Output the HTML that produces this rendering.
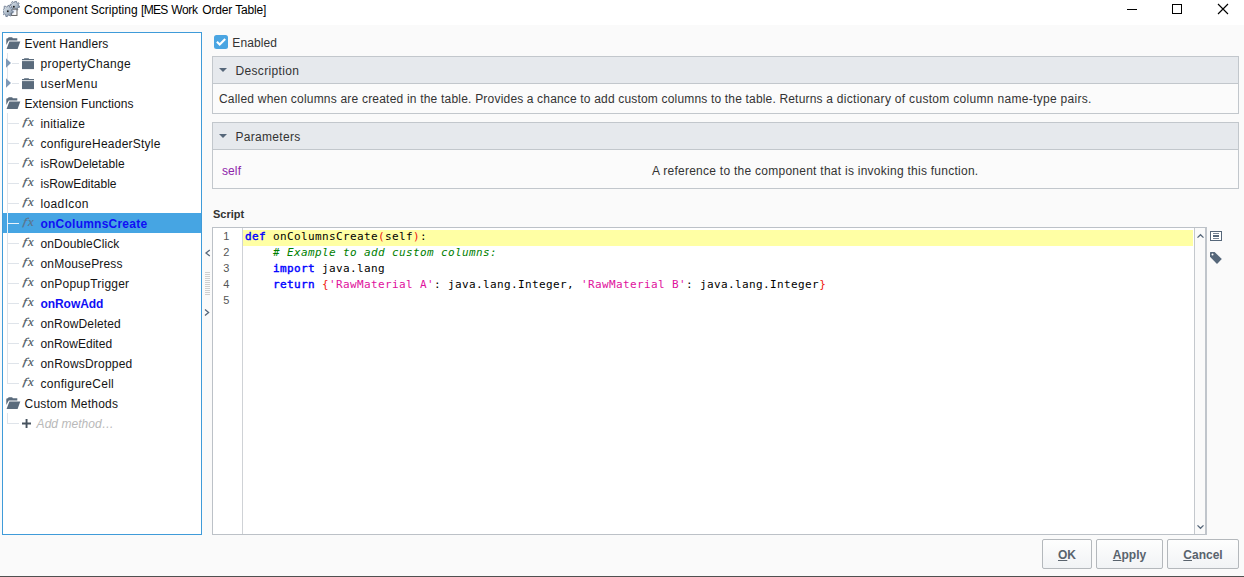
<!DOCTYPE html>
<html lang="en">
<head>
<meta charset="utf-8">
<title>Component Scripting [MES Work Order Table]</title>
<style>
*{box-sizing:border-box;margin:0;padding:0}
html,body{width:1244px;height:577px;overflow:hidden;background:#fafafa;font-family:"Liberation Sans","DejaVu Sans",sans-serif;font-size:12px;color:#222}
.abs{position:absolute}
#titlebar{position:absolute;left:0;top:0;width:1244px;height:25px;background:#fff}
#title{position:absolute;left:24px;top:2px;font-size:12px;line-height:16px;color:#000;white-space:nowrap}
#title span{position:absolute;top:0}
#tree{position:absolute;left:2px;top:32px;width:200px;height:503px;background:#fff;border:1px solid #3f9bd9;overflow:hidden}
.row{position:absolute;left:0;width:198px;height:20px;white-space:nowrap}
.row .t{position:absolute;top:1px;line-height:20px;font-size:12px;color:#141414}
.row.sel{background:#46a5e3}
.row .t.bold{font-weight:bold;color:#0f0ff5}
.row .t.add{font-style:italic;color:#b9b9b9}
.ic{position:absolute;display:block}
.fx{position:absolute;left:19px;top:0;height:20px;font-family:"Liberation Serif","DejaVu Serif",serif;white-space:nowrap}
.fx i{position:absolute;font-style:italic;line-height:1}
.fx i{font-weight:normal;-webkit-text-stroke:0.35px currentColor}
.fx .f{left:2.3px;top:3.4px;font-size:10.8px;transform:scaleX(1.28);transform-origin:0 100%}
.fx .x{left:6.1px;top:2px;font-size:12.5px}
.vl{position:absolute;left:4px;width:1px;background:#dfe4ea;z-index:1}
.hl{position:absolute;height:1px;background:#dfe4ea}
.box{position:absolute;left:212px;width:1027px;border:1px solid #c2c7cc;background:#fbfbfb}
.box .hd{height:27px;background:#e6e9ed;border-bottom:1px solid #c2c7cc;position:relative}
.box .hd span{position:absolute;left:22.5px;top:1px;line-height:27px;font-size:12px;color:#333}
.tri{position:absolute;left:6px;top:11px;width:0;height:0;border-left:4px solid transparent;border-right:4px solid transparent;border-top:4.5px solid #56677a}
.btn{position:absolute;top:539px;height:30px;border:1px solid #b4b8bc;border-radius:2px;background:linear-gradient(#fefefe,#f1f3f5);font-weight:bold;font-size:12px;color:#59636d;text-align:center;line-height:30px;white-space:nowrap}
.btn u{text-decoration:underline;text-underline-offset:0.5px}
#editor{position:absolute;left:212px;top:227px;width:995px;height:308px;border:1px solid #bcc1c7;border-right:2px solid #c0c5cb;background:#fff}
.ln{position:absolute;left:3.4px;width:20px;text-align:center;font-size:11px;color:#555;height:16px;line-height:16px}
.code{position:absolute;left:32px;height:16px;line-height:16px;font-family:"DejaVu Sans Mono","Liberation Mono",monospace;font-size:11px;letter-spacing:0.378px;white-space:pre;color:#000}
.kw{color:#0000ff;-webkit-text-stroke:0.4px #0000ff}
.cm{color:#008000;font-style:italic}
.st{color:#e0119d}
.br{color:#f02010}
</style>
</head>
<body>
<div id="titlebar">
  <svg class="abs" style="left:2.7px;top:0.7px" width="17" height="17" viewBox="0 0 18 18">
    <defs>
      <linearGradient id="gg" x1="0" y1="0" x2="1" y2="1"><stop offset="0" stop-color="#eef2f6"/><stop offset="0.5" stop-color="#b4c1cf"/><stop offset="1" stop-color="#76889d"/></linearGradient>
      <linearGradient id="sq" x1="0" y1="0" x2="1" y2="1"><stop offset="0" stop-color="#b9c9e4"/><stop offset="0.7" stop-color="#ffffff"/></linearGradient>
    </defs>
    <path d="M17.59 5.42 L17.31 6.79 L15.96 6.67 L15.26 7.72 L15.87 8.92 L14.71 9.70 L13.84 8.66 L12.60 8.90 L12.18 10.19 L10.81 9.91 L10.93 8.56 L9.88 7.86 L8.68 8.47 L7.90 7.31 L8.94 6.44 L8.70 5.20 L7.41 4.78 L7.69 3.41 L9.04 3.53 L9.74 2.48 L9.13 1.28 L10.29 0.50 L11.16 1.54 L12.40 1.30 L12.82 0.01 L14.19 0.29 L14.07 1.64 L15.12 2.34 L16.32 1.73 L17.10 2.89 L16.06 3.76 L16.30 5.00 Z" fill="url(#gg)" stroke="#66758a" stroke-width="0.9"/>
    <rect x="8.9" y="8.6" width="5.9" height="6.7" fill="url(#sq)" stroke="#666" stroke-width="1.1"/>
    <path d="M10.89 10.98 L10.56 12.59 L9.00 12.46 L8.16 13.70 L8.87 15.10 L7.50 16.01 L6.48 14.81 L5.02 15.10 L4.52 16.59 L2.91 16.26 L3.04 14.70 L1.80 13.86 L0.40 14.57 L-0.51 13.20 L0.69 12.18 L0.40 10.72 L-1.09 10.22 L-0.76 8.61 L0.80 8.74 L1.64 7.50 L0.93 6.10 L2.30 5.19 L3.32 6.39 L4.78 6.10 L5.28 4.61 L6.89 4.94 L6.76 6.50 L8.00 7.34 L9.40 6.63 L10.31 8.00 L9.11 9.02 L9.40 10.48 Z" fill="url(#gg)" stroke="#6c7a8f" stroke-width="0.9"/>
    <circle cx="11.5" cy="6.1" r="1" fill="#1c1c1c"/>
    <circle cx="5.1" cy="10.8" r="1" fill="#1c1c1c"/>
  </svg>
  <div id="title"><span style="left:0.10px;letter-spacing:0.175px">Component</span> <span style="left:66.70px;letter-spacing:0.025px">Scripting</span> <span style="left:116.95px;letter-spacing:-0.633px">[MES</span> <span style="left:147.25px;letter-spacing:-0.367px">Work</span> <span style="left:178.30px;letter-spacing:-0.2px">Order</span> <span style="left:211.25px;letter-spacing:-0.18px">Table]</span></div>
  <div class="abs" style="left:1127px;top:9px;width:10px;height:1px;background:#000"></div>
  <div class="abs" style="left:1172px;top:4px;width:10px;height:10px;border:1px solid #000"></div>
  <svg class="abs" style="left:1217px;top:3px" width="12" height="12" viewBox="0 0 12 12"><path d="M1 1 L11 11 M11 1 L1 11" stroke="#000" stroke-width="1.15" fill="none"/></svg>
</div>

<div id="tree">
  <div class="vl" style="top:20px;height:30px"></div>
  <div class="vl" style="top:80px;height:271px"></div>
  <div class="vl" style="top:380px;height:11px"></div>
  <div class="vl" style="top:180px;height:20px;background:#e9f3fb;z-index:2"></div>
  <div class="row" style="top:0px"><svg class="ic" style="left:3px;top:4px" width="15" height="13" viewBox="0 0 15 13"><path d="M0.3 2.2 Q0.3 1.2 1.3 1.2 L2 1.2 L2.6 0.2 L6.2 0.2 L6.8 1.2 L11.3 1.2 L11.3 3.6 L2.8 3.6 L0.3 8 Z" fill="#5a6b7c"/><path d="M3.4 4.4 L14.3 4.4 L11.6 12 L0.6 12 Z" fill="#5a6b7c"/></svg><span class="t" style="left:21.5px;letter-spacing:0.14px">Event Handlers</span></div>
  <div class="row" style="top:20px"><i class="hl" style="left:9px;top:10px;width:7px;background:#dfe4ea"></i><svg class="ic" style="left:3px;top:5px;z-index:3" width="5" height="10" viewBox="0 0 5 10"><path d="M0 0.2 L5 5 L0 9.8 Z" fill="#7d98b5"/></svg><svg class="ic" style="left:19px;top:5px" width="12" height="12" viewBox="0 0 12 12"><path d="M2.4 0.2 L6.6 0.2 L7.2 1 L12 1 L12 2.2 L0 2.2 L0 1 L1.8 1 Z" fill="#5a6b7c"/><rect x="0" y="3.1" width="12" height="8" fill="#5a6b7c"/></svg><span class="t" style="left:37.5px;letter-spacing:0.31px">propertyChange</span></div>
  <div class="row" style="top:40px"><i class="hl" style="left:9px;top:10px;width:7px;background:#dfe4ea"></i><svg class="ic" style="left:3px;top:5px;z-index:3" width="5" height="10" viewBox="0 0 5 10"><path d="M0 0.2 L5 5 L0 9.8 Z" fill="#7d98b5"/></svg><svg class="ic" style="left:19px;top:5px" width="12" height="12" viewBox="0 0 12 12"><path d="M2.4 0.2 L6.6 0.2 L7.2 1 L12 1 L12 2.2 L0 2.2 L0 1 L1.8 1 Z" fill="#5a6b7c"/><rect x="0" y="3.1" width="12" height="8" fill="#5a6b7c"/></svg><span class="t" style="left:37.5px;letter-spacing:0.5px">userMenu</span></div>
  <div class="row" style="top:60px"><svg class="ic" style="left:3px;top:4px" width="15" height="13" viewBox="0 0 15 13"><path d="M0.3 2.2 Q0.3 1.2 1.3 1.2 L2 1.2 L2.6 0.2 L6.2 0.2 L6.8 1.2 L11.3 1.2 L11.3 3.6 L2.8 3.6 L0.3 8 Z" fill="#5a6b7c"/><path d="M3.4 4.4 L14.3 4.4 L11.6 12 L0.6 12 Z" fill="#5a6b7c"/></svg><span class="t" style="left:21.5px;letter-spacing:0.05px">Extension Functions</span></div>
  <div class="row" style="top:80px"><i class="hl" style="left:5px;top:10px;width:11px;background:#dfe4ea"></i><svg class="ic" style="left:18px;top:3px;overflow:visible" width="15" height="14" viewBox="0 0 15 14" fill="#4c5863" stroke="#4c5863" stroke-width="0.18" font-family="Liberation Serif, DejaVu Serif, serif" font-style="italic"><text transform="translate(1.6 8.93) skewX(-9) scale(1.38 1)" font-size="10.2">f</text><text transform="translate(6.9 9.5) scale(1.06 1)" font-size="12">x</text></svg><span class="t" style="left:37.5px;letter-spacing:0.2px">initialize</span></div>
  <div class="row" style="top:100px"><i class="hl" style="left:5px;top:10px;width:11px;background:#dfe4ea"></i><svg class="ic" style="left:18px;top:3px;overflow:visible" width="15" height="14" viewBox="0 0 15 14" fill="#4c5863" stroke="#4c5863" stroke-width="0.18" font-family="Liberation Serif, DejaVu Serif, serif" font-style="italic"><text transform="translate(1.6 8.93) skewX(-9) scale(1.38 1)" font-size="10.2">f</text><text transform="translate(6.9 9.5) scale(1.06 1)" font-size="12">x</text></svg><span class="t" style="left:37.5px;letter-spacing:0.237px">configureHeaderStyle</span></div>
  <div class="row" style="top:120px"><i class="hl" style="left:5px;top:10px;width:11px;background:#dfe4ea"></i><svg class="ic" style="left:18px;top:3px;overflow:visible" width="15" height="14" viewBox="0 0 15 14" fill="#4c5863" stroke="#4c5863" stroke-width="0.18" font-family="Liberation Serif, DejaVu Serif, serif" font-style="italic"><text transform="translate(1.6 8.93) skewX(-9) scale(1.38 1)" font-size="10.2">f</text><text transform="translate(6.9 9.5) scale(1.06 1)" font-size="12">x</text></svg><span class="t" style="left:37.5px;letter-spacing:0.054px">isRowDeletable</span></div>
  <div class="row" style="top:140px"><i class="hl" style="left:5px;top:10px;width:11px;background:#dfe4ea"></i><svg class="ic" style="left:18px;top:3px;overflow:visible" width="15" height="14" viewBox="0 0 15 14" fill="#4c5863" stroke="#4c5863" stroke-width="0.18" font-family="Liberation Serif, DejaVu Serif, serif" font-style="italic"><text transform="translate(1.6 8.93) skewX(-9) scale(1.38 1)" font-size="10.2">f</text><text transform="translate(6.9 9.5) scale(1.06 1)" font-size="12">x</text></svg><span class="t" style="left:37.5px">isRowEditable</span></div>
  <div class="row" style="top:160px"><i class="hl" style="left:5px;top:10px;width:11px;background:#dfe4ea"></i><svg class="ic" style="left:18px;top:3px;overflow:visible" width="15" height="14" viewBox="0 0 15 14" fill="#4c5863" stroke="#4c5863" stroke-width="0.18" font-family="Liberation Serif, DejaVu Serif, serif" font-style="italic"><text transform="translate(1.6 8.93) skewX(-9) scale(1.38 1)" font-size="10.2">f</text><text transform="translate(6.9 9.5) scale(1.06 1)" font-size="12">x</text></svg><span class="t" style="left:37.5px;letter-spacing:0.36px">loadIcon</span></div>
  <div class="row sel" style="top:180px"><i class="hl" style="left:5px;top:10px;width:11px;background:#e9f3fb"></i><svg class="ic" style="left:18px;top:3px;overflow:visible" width="15" height="14" viewBox="0 0 15 14" fill="#5d748b" stroke="#5d748b" stroke-width="0.18" font-family="Liberation Serif, DejaVu Serif, serif" font-style="italic"><text transform="translate(1.6 8.93) skewX(-9) scale(1.38 1)" font-size="10.2">f</text><text transform="translate(6.9 9.5) scale(1.06 1)" font-size="12">x</text></svg><span class="t bold" style="left:37.5px;letter-spacing:0.23px">onColumnsCreate</span></div>
  <div class="row" style="top:200px"><i class="hl" style="left:5px;top:10px;width:11px;background:#dfe4ea"></i><svg class="ic" style="left:18px;top:3px;overflow:visible" width="15" height="14" viewBox="0 0 15 14" fill="#4c5863" stroke="#4c5863" stroke-width="0.18" font-family="Liberation Serif, DejaVu Serif, serif" font-style="italic"><text transform="translate(1.6 8.93) skewX(-9) scale(1.38 1)" font-size="10.2">f</text><text transform="translate(6.9 9.5) scale(1.06 1)" font-size="12">x</text></svg><span class="t" style="left:37.5px;letter-spacing:0.125px">onDoubleClick</span></div>
  <div class="row" style="top:220px"><i class="hl" style="left:5px;top:10px;width:11px;background:#dfe4ea"></i><svg class="ic" style="left:18px;top:3px;overflow:visible" width="15" height="14" viewBox="0 0 15 14" fill="#4c5863" stroke="#4c5863" stroke-width="0.18" font-family="Liberation Serif, DejaVu Serif, serif" font-style="italic"><text transform="translate(1.6 8.93) skewX(-9) scale(1.38 1)" font-size="10.2">f</text><text transform="translate(6.9 9.5) scale(1.06 1)" font-size="12">x</text></svg><span class="t" style="left:37.5px;letter-spacing:0.18px">onMousePress</span></div>
  <div class="row" style="top:240px"><i class="hl" style="left:5px;top:10px;width:11px;background:#dfe4ea"></i><svg class="ic" style="left:18px;top:3px;overflow:visible" width="15" height="14" viewBox="0 0 15 14" fill="#4c5863" stroke="#4c5863" stroke-width="0.18" font-family="Liberation Serif, DejaVu Serif, serif" font-style="italic"><text transform="translate(1.6 8.93) skewX(-9) scale(1.38 1)" font-size="10.2">f</text><text transform="translate(6.9 9.5) scale(1.06 1)" font-size="12">x</text></svg><span class="t" style="left:37.5px;letter-spacing:0.23px">onPopupTrigger</span></div>
  <div class="row" style="top:260px"><i class="hl" style="left:5px;top:10px;width:11px;background:#dfe4ea"></i><svg class="ic" style="left:18px;top:3px;overflow:visible" width="15" height="14" viewBox="0 0 15 14" fill="#4c5863" stroke="#4c5863" stroke-width="0.18" font-family="Liberation Serif, DejaVu Serif, serif" font-style="italic"><text transform="translate(1.6 8.93) skewX(-9) scale(1.38 1)" font-size="10.2">f</text><text transform="translate(6.9 9.5) scale(1.06 1)" font-size="12">x</text></svg><span class="t bold" style="left:37.5px;letter-spacing:-0.07px">onRowAdd</span></div>
  <div class="row" style="top:280px"><i class="hl" style="left:5px;top:10px;width:11px;background:#dfe4ea"></i><svg class="ic" style="left:18px;top:3px;overflow:visible" width="15" height="14" viewBox="0 0 15 14" fill="#4c5863" stroke="#4c5863" stroke-width="0.18" font-family="Liberation Serif, DejaVu Serif, serif" font-style="italic"><text transform="translate(1.6 8.93) skewX(-9) scale(1.38 1)" font-size="10.2">f</text><text transform="translate(6.9 9.5) scale(1.06 1)" font-size="12">x</text></svg><span class="t" style="left:37.5px;letter-spacing:0.136px">onRowDeleted</span></div>
  <div class="row" style="top:300px"><i class="hl" style="left:5px;top:10px;width:11px;background:#dfe4ea"></i><svg class="ic" style="left:18px;top:3px;overflow:visible" width="15" height="14" viewBox="0 0 15 14" fill="#4c5863" stroke="#4c5863" stroke-width="0.18" font-family="Liberation Serif, DejaVu Serif, serif" font-style="italic"><text transform="translate(1.6 8.93) skewX(-9) scale(1.38 1)" font-size="10.2">f</text><text transform="translate(6.9 9.5) scale(1.06 1)" font-size="12">x</text></svg><span class="t" style="left:37.5px;letter-spacing:0.02px">onRowEdited</span></div>
  <div class="row" style="top:320px"><i class="hl" style="left:5px;top:10px;width:11px;background:#dfe4ea"></i><svg class="ic" style="left:18px;top:3px;overflow:visible" width="15" height="14" viewBox="0 0 15 14" fill="#4c5863" stroke="#4c5863" stroke-width="0.18" font-family="Liberation Serif, DejaVu Serif, serif" font-style="italic"><text transform="translate(1.6 8.93) skewX(-9) scale(1.38 1)" font-size="10.2">f</text><text transform="translate(6.9 9.5) scale(1.06 1)" font-size="12">x</text></svg><span class="t" style="left:37.5px;letter-spacing:0.19px">onRowsDropped</span></div>
  <div class="row" style="top:340px"><i class="hl" style="left:5px;top:10px;width:11px;background:#dfe4ea"></i><svg class="ic" style="left:18px;top:3px;overflow:visible" width="15" height="14" viewBox="0 0 15 14" fill="#4c5863" stroke="#4c5863" stroke-width="0.18" font-family="Liberation Serif, DejaVu Serif, serif" font-style="italic"><text transform="translate(1.6 8.93) skewX(-9) scale(1.38 1)" font-size="10.2">f</text><text transform="translate(6.9 9.5) scale(1.06 1)" font-size="12">x</text></svg><span class="t" style="left:37.5px;letter-spacing:0.27px">configureCell</span></div>
  <div class="row" style="top:360px"><svg class="ic" style="left:3px;top:4px" width="15" height="13" viewBox="0 0 15 13"><path d="M0.3 2.2 Q0.3 1.2 1.3 1.2 L2 1.2 L2.6 0.2 L6.2 0.2 L6.8 1.2 L11.3 1.2 L11.3 3.6 L2.8 3.6 L0.3 8 Z" fill="#5a6b7c"/><path d="M3.4 4.4 L14.3 4.4 L11.6 12 L0.6 12 Z" fill="#5a6b7c"/></svg><span class="t" style="left:21.5px;letter-spacing:0.21px">Custom Methods</span></div>
  <div class="row" style="top:380px"><i class="hl" style="left:5px;top:10px;width:11px;background:#dfe4ea"></i><svg class="ic" style="left:19px;top:6px" width="9" height="9" viewBox="0 0 9 9"><path d="M3.6 0h1.9v3.6h3.5v1.9h-3.5v3.5h-1.9v-3.5h-3.6v-1.9h3.6z" fill="#46525e"/></svg><span class="t add" style="left:33.6px;letter-spacing:0.04px">Add method…</span></div>
</div>

<div class="abs" style="left:214px;top:35px;width:14px;height:14px;border-radius:2.5px;background:#4aa5e2">
  <svg width="14" height="14" viewBox="0 0 14 14" style="display:block"><path d="M2.9 6.8 L5.7 9.6 L11.2 3.9" stroke="#fff" stroke-width="2.1" fill="none" stroke-linecap="butt" stroke-linejoin="miter"/></svg>
</div>
<div class="abs" style="left:232.3px;top:35px;line-height:16px;font-size:12px;color:#333;letter-spacing:0.1px">Enabled</div>

<div class="box" style="top:56px;height:58px">
  <div class="hd"><i class="tri"></i><span style="letter-spacing:0.34px">Description</span></div>
  <div class="abs" style="left:6px;top:28px;height:28px;line-height:28px;font-size:12px;white-space:nowrap;color:#333"><span class="abs" style="left:0.00px;top:0;letter-spacing:0.203px">Called when columns are created in the table. Provides</span> <span class="abs" style="left:307.75px;top:0;letter-spacing:0.175px">a chance to add custom columns to the table. Returns a</span> <span class="abs" style="left:617.75px;top:0;letter-spacing:0.308px">dictionary of custom column name-type pairs.</span></div>
</div>

<div class="box" style="top:122px;height:67px">
  <div class="hd"><i class="tri"></i><span style="letter-spacing:0.3px">Parameters</span></div>
  <div class="abs" style="left:9px;top:29px;line-height:38px;font-size:12px;color:#8e24aa;letter-spacing:0.1px">self</div>
  <div class="abs" style="left:439px;top:29px;line-height:38px;font-size:12px;white-space:nowrap;color:#333;letter-spacing:0.26px">A reference to the component that is invoking this function.</div>
</div>

<div class="abs" style="left:213px;top:206px;line-height:16px;font-size:11px;font-weight:bold;color:#333">Script</div>

<!-- splitter -->
<svg class="abs" style="left:203px;top:248px" width="9" height="70" viewBox="0 0 9 70">
  <path d="M6.8 2 L3 5 L6.8 8" stroke="#56677a" stroke-width="1.3" fill="none"/>
  <path d="M2 61.5 L5.6 64.5 L2 67.5" stroke="#56677a" stroke-width="1.3" fill="none"/>
  <g fill="#cfcfcf"><rect x="2" y="24" width="5" height="1"/><rect x="2" y="26" width="5" height="1"/><rect x="2" y="28" width="5" height="1"/><rect x="2" y="30" width="5" height="1"/><rect x="2" y="32" width="5" height="1"/><rect x="2" y="34" width="5" height="1"/><rect x="2" y="36" width="5" height="1"/><rect x="2" y="38" width="5" height="1"/><rect x="2" y="40" width="5" height="1"/><rect x="2" y="42" width="5" height="1"/><rect x="2" y="44" width="5" height="1"/><rect x="2" y="46" width="5" height="1"/></g>
</svg>

<div id="editor">
  <div class="abs" style="left:29px;top:0;width:1px;height:306px;background:#cfd2d6"></div>
  <div class="abs" style="left:30px;top:2px;width:950px;height:16px;background:#ffffa4"></div>
  <div class="ln" style="top:0px">1</div>
  <div class="ln" style="top:16px">2</div>
  <div class="ln" style="top:32px">3</div>
  <div class="ln" style="top:48px">4</div>
  <div class="ln" style="top:64px">5</div>
  <div class="code" style="top:1px"><span class="kw">def</span> onColumnsCreate<span class="br">(</span>self<span class="br">)</span>:</div>
  <div class="code" style="top:17px">    <span class="cm"># Example to add custom columns:</span></div>
  <div class="code" style="top:33px">    <span class="kw">import</span> java.lang</div>
  <div class="code" style="top:49px">    <span class="kw">return</span> <span class="br">{</span><span class="st">'RawMaterial A'</span>: java.lang.Integer, <span class="st">'RawMaterial B'</span>: java.lang.Integer<span class="br">}</span></div>
  <div class="abs" style="left:981px;top:0;width:11px;height:306px;background:#fafafa;border-left:1px solid #c4c8cd"></div>
  <svg class="abs" style="left:982.5px;top:4px" width="9" height="8" viewBox="0 0 9 8"><path d="M1.5 5.6 L4.5 2.7 L7.5 5.6" stroke="#56677a" stroke-width="1.3" fill="none"/></svg>
  <svg class="abs" style="left:982.5px;top:295.3px" width="9" height="8" viewBox="0 0 9 8"><path d="M1.5 2.4 L4.5 5.3 L7.5 2.4" stroke="#56677a" stroke-width="1.3" fill="none"/></svg>
</div>

<!-- side icons -->
<svg class="abs" style="left:1210px;top:231px" width="12" height="10" viewBox="0 0 12 10"><rect x="0.5" y="0.5" width="11" height="9" fill="#fff" stroke="#56677a" stroke-width="1"/><rect x="3" y="2" width="6" height="1" fill="#56677a" opacity=".8"/><rect x="3" y="4" width="6" height="2" fill="#56677a"/><rect x="3" y="7" width="6" height="1" fill="#56677a" opacity=".8"/></svg>
<svg class="abs" style="left:1210px;top:252px" width="12" height="12" viewBox="0 0 12 12"><path d="M0 0.6 Q0 0 0.6 0 L4.6 0 L11.8 7 L7 11.9 L0 4.8 Z" fill="#56677a"/><circle cx="2.5" cy="2.6" r="1" fill="#fff"/></svg>

<div class="btn" style="left:1042px;width:50px"><u>O</u>K</div>
<div class="btn" style="left:1096px;width:67px"><u>A</u>pply</div>
<div class="btn" style="left:1167px;width:72px"><u>C</u>ancel</div>

<div class="abs" style="left:0;top:576px;width:1244px;height:1px;background:#505050"></div>
</body>
</html>
